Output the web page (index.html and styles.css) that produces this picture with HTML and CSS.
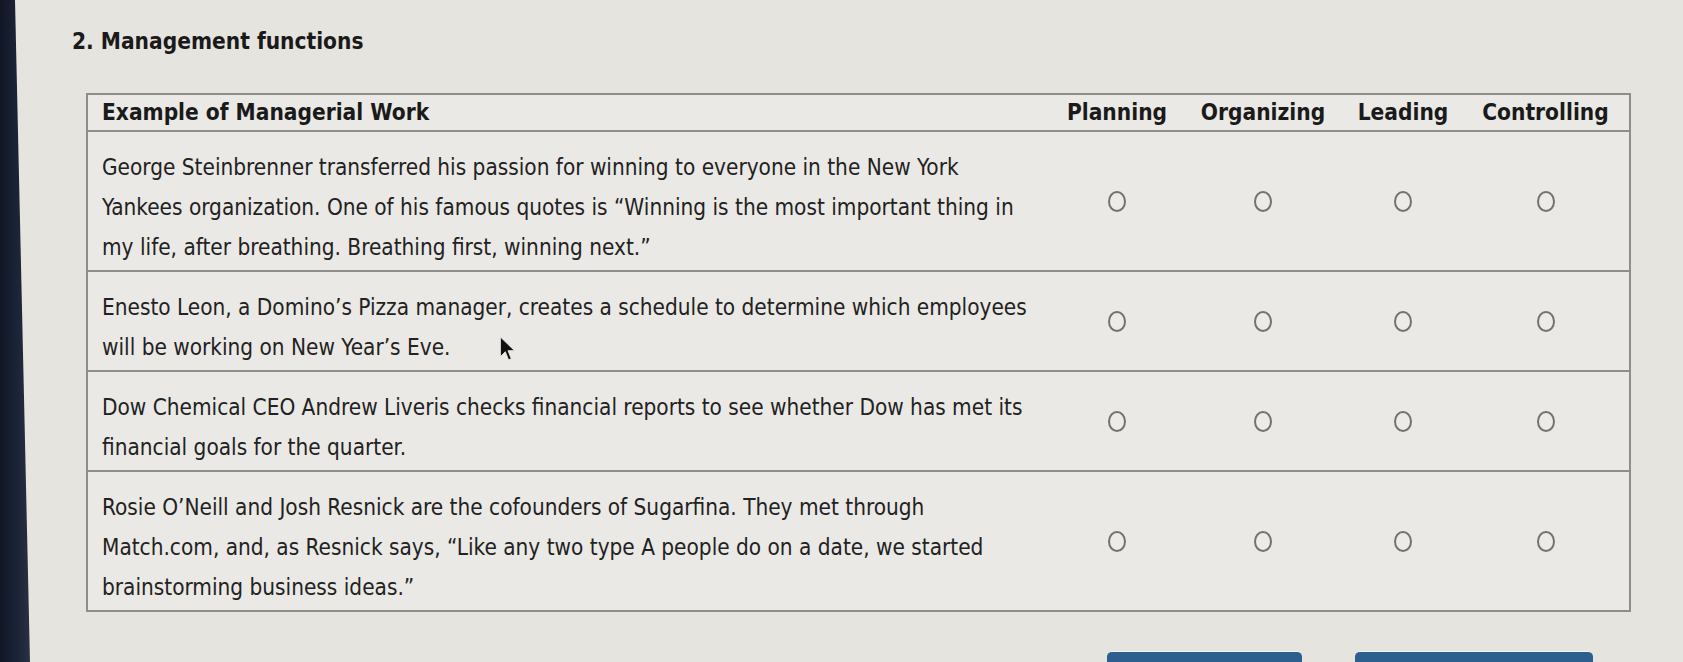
FILE: index.html
```html
<!DOCTYPE html>
<html lang="en">
<head>
<meta charset="utf-8">
<title>Management functions</title>
<link rel="stylesheet" href="styles.css">
</head>
<body>
<div class="screen">
  <div class="bezel"></div>
  <main class="content">
    <h2 class="title">2. Management functions</h2>
    <table class="grid">
      <colgroup>
        <col class="c-text">
        <col class="c-plan">
        <col class="c-org">
        <col class="c-lead">
        <col class="c-ctrl">
      </colgroup>
      <thead>
        <tr>
          <th class="th-text">Example of Managerial Work</th>
          <th>Planning</th>
          <th>Organizing</th>
          <th>Leading</th>
          <th>Controlling</th>
        </tr>
      </thead>
      <tbody>
        <tr>
          <td class="desc">George Steinbrenner transferred his passion for winning to everyone in the New York Yankees organization. One of his famous quotes is “Winning is the most important thing in my life, after breathing. Breathing first, winning next.”</td>
          <td class="opt"><span class="radio"></span></td>
          <td class="opt"><span class="radio"></span></td>
          <td class="opt"><span class="radio"></span></td>
          <td class="opt"><span class="radio"></span></td>
        </tr>
        <tr>
          <td class="desc">Enesto Leon, a Domino’s Pizza manager, creates a schedule to determine which employees will be working on New Year’s Eve.</td>
          <td class="opt"><span class="radio"></span></td>
          <td class="opt"><span class="radio"></span></td>
          <td class="opt"><span class="radio"></span></td>
          <td class="opt"><span class="radio"></span></td>
        </tr>
        <tr>
          <td class="desc">Dow Chemical CEO Andrew Liveris checks financial reports to see whether Dow has met its financial goals for the quarter.</td>
          <td class="opt"><span class="radio"></span></td>
          <td class="opt"><span class="radio"></span></td>
          <td class="opt"><span class="radio"></span></td>
          <td class="opt"><span class="radio"></span></td>
        </tr>
        <tr>
          <td class="desc">Rosie O’Neill and Josh Resnick are the cofounders of Sugarfina. They met through Match.com, and, as Resnick says, “Like any two type A people do on a date, we started brainstorming business ideas.”</td>
          <td class="opt"><span class="radio"></span></td>
          <td class="opt"><span class="radio"></span></td>
          <td class="opt"><span class="radio"></span></td>
          <td class="opt"><span class="radio"></span></td>
        </tr>
      </tbody>
    </table>
    <div class="actions">
      <button class="btn btn-grade" aria-label="Grade It Now"></button>
      <button class="btn btn-save" aria-label="Save and Continue"></button>
    </div>
  </main>
  <svg class="cursor" width="18" height="26" viewBox="0 0 16 24" aria-hidden="true">
    <path d="M1 1 L1 19 L5.5 14.5 L8.5 22 L11 21 L8 13.5 L14 13.5 Z" fill="#111" stroke="#e8e8e8" stroke-width="0.8"/>
  </svg>
</div>
</body>
</html>
```

FILE: styles.css
```css
html, body {
  margin: 0;
  padding: 0;
  height: 100%;
  overflow: hidden;
}

body {
  background: #e6e4df;
  font-family: "DejaVu Sans Condensed", "DejaVu Sans", sans-serif;
  color: #1c1c1c;
}

.screen {
  position: relative;
  display: flex;
  height: 662px;
}

.bezel {
  width: 30px;
  flex: 0 0 30px;
  background: linear-gradient(90deg, #111726 0%, #1c2438 60%, #2a3142 100%);
  clip-path: polygon(0 0, 15px 0, 30px 100%, 0 100%);
}

.content {
  flex: 1;
  padding: 27px 0 0 42px;
  margin-left: -8px;
}

.title {
  margin: 0 0 0 8px;
  font-size: 22.5px;
  line-height: 28px;
  font-weight: bold;
  color: #1a1a1a;
}

.grid {
  margin: 38px 0 0 22px;
  width: 1543px;
  border-collapse: collapse;
  table-layout: fixed;
  border: 2px solid #8d8d8b;
  background: #eae9e5;
}

.c-text { width: 965px; }
.c-plan { width: 130px; }
.c-org { width: 162px; }
.c-lead { width: 118px; }
.c-ctrl { width: 168px; }

.grid th {
  font-size: 22.5px;
  font-weight: bold;
  line-height: 25px;
  padding: 5px 2px 5px;
  text-align: center;
  color: #1a1a1a;
  border-bottom: 2px solid #8d8d8b;
  white-space: nowrap;
}

.grid th.th-text {
  text-align: left;
  padding-left: 14px;
}

.grid td {
  border-bottom: 2px solid #8d8d8b;
  vertical-align: middle;
}

.desc {
  font-size: 22.4px;
  line-height: 40px;
  padding: 15px 14px 3px 14px;
  color: #222;
}

.opt {
  text-align: center;
}

.radio {
  display: inline-block;
  width: 18px;
  height: 21px;
  border: 2px solid #727272;
  border-radius: 50%;
  box-sizing: border-box;
  vertical-align: middle;
  background: #ecebe7;
}

.actions {
  display: flex;
  justify-content: flex-end;
  gap: 53px;
  margin: 39px 0 0 0;
  width: 1529px;
}

.btn {
  height: 11px;
  padding: 0;
  border: none;
  border-top: 1px solid #f4f4f4;
  border-radius: 5px 5px 0 0;
  background: #2c5f8d;
}

.btn-grade { width: 195px; }
.btn-save { width: 238px; }

.cursor {
  position: absolute;
  left: 499px;
  top: 336px;
}
```
